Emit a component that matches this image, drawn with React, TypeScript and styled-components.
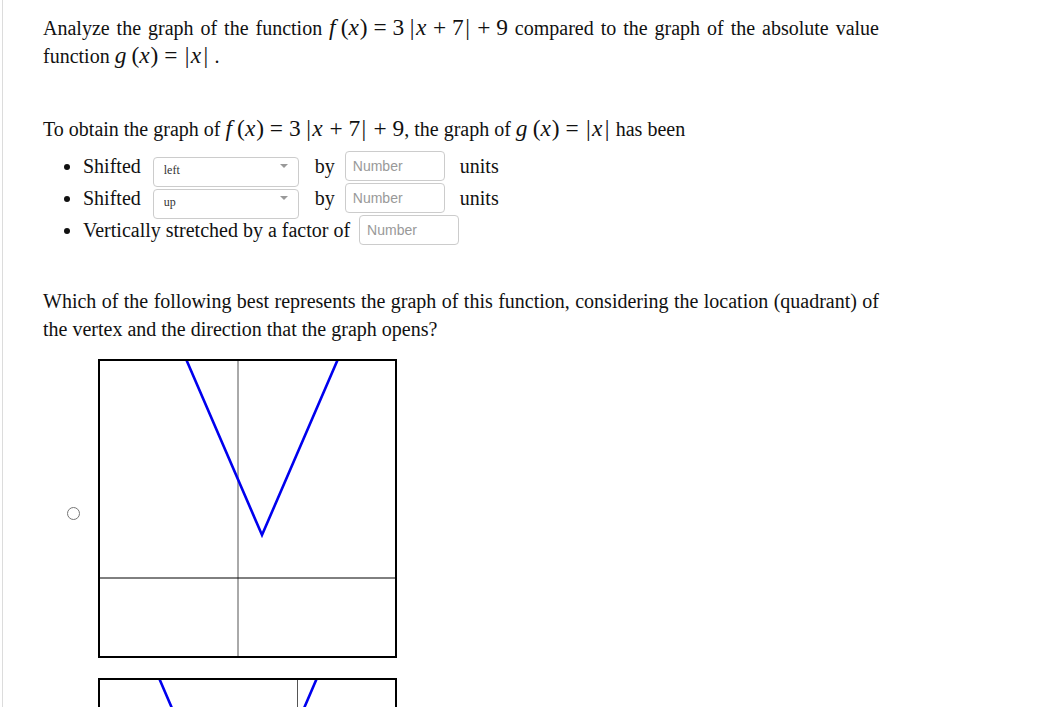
import styled, { createGlobalStyle } from "styled-components";

const GlobalStyle = createGlobalStyle`
  html, body {
    margin: 0;
    padding: 0;
    background: #fff;
  }
  body {
    font-family: "Liberation Serif", "Times New Roman", serif;
    font-size: 20px;
    color: #111;
  }
`;

const Page = styled.div`
  min-height: 707px;
  margin-left: 2px;
  border-left: 1px solid #dcdcdc;
  padding: 14px 0 0 40px;
  box-sizing: border-box;
`;

const Content = styled.div`
  width: 836px;
`;

const Para = styled.p<{ $gap?: number }>`
  margin: 0 0 ${({ $gap }) => $gap ?? 0}px;
  line-height: 28px;
  text-align: justify;
`;

const MathSpan = styled.span`
  font-size: 1.17em;
  line-height: 1;
  white-space: nowrap;
`;

const V = styled.i`
  font-style: italic;
  font-family: "Liberation Serif", serif;
  padding-right: 0.04em;
`;

const Op = styled.span`
  margin: 0 0.25em;
`;

const Sp = styled.span`
  margin-right: 0.18em;
`;

const Bar = styled.span`
  font-style: normal;
  margin: 0 0.06em;
`;

const List = styled.ul`
  margin: 7px 0 41px;
  padding-left: 40px;
`;

const Item = styled.li`
  height: 32px;
  line-height: 32px;
`;

const Row = styled.div`
  display: flex;
  align-items: center;
  height: 32px;
`;

const Word = styled.span``;

const SelectWrap = styled.div`
  position: relative;
  width: 146px;
  height: 30px;
  margin: 0 16px 0 12px;
`;

const Select = styled.select`
  appearance: none;
  width: 100%;
  height: 100%;
  box-sizing: border-box;
  border: 1px solid #ccc;
  border-radius: 4px;
  background: #fff;
  padding: 0 10px 3px;
  font-family: "Liberation Serif", serif;
  font-size: 12px;
  color: #333;
`;

const Caret = styled.span`
  position: absolute;
  right: 11px;
  top: 13px;
  width: 0;
  height: 0;
  border-left: 4px solid transparent;
  border-right: 4px solid transparent;
  border-top: 4px solid #999;
  pointer-events: none;
`;

const NumberInput = styled.input<{ $ml?: number }>`
  width: 100px;
  height: 30px;
  box-sizing: border-box;
  margin: 0 15px 0 ${({ $ml }) => $ml ?? 10}px;
  border: 1px solid #ccc;
  border-radius: 4px;
  padding: 0 7px;
  font-family: "Liberation Sans", Arial, sans-serif;
  font-size: 14px;
  &::placeholder {
    color: #999;
  }
`;

const Choice = styled.label`
  display: flex;
  align-items: center;
  margin-bottom: 20px;
`;

const Radio = styled.input`
  width: 13px;
  height: 13px;
  margin: 10px 18px 0 24px;
  accent-color: #888;
`;

const GraphBox = styled.svg`
  display: block;
  width: 299px;
  height: 299px;
`;

type GraphProps = { axisX: number; axisY: number; v: [number, number]; top: number[] };

const Graph = ({ axisX, axisY, v, top }: GraphProps) => (
  <GraphBox viewBox="0 0 299 299">
    <line x1={axisX} y1="0" x2={axisX} y2="299" stroke="#555" strokeWidth="1" />
    <line x1="0" y1={axisY} x2="299" y2={axisY} stroke="#000" strokeWidth="1" />
    <polyline
      points={`${top[0]},0 ${v[0]},${v[1]} ${top[1]},0`}
      fill="none"
      stroke="#0000ee"
      strokeWidth="2.6"
      strokeLinejoin="miter"
    />
    <rect x="1" y="1" width="297" height="297" fill="none" stroke="#000" strokeWidth="2" />
  </GraphBox>
);

const F = ({ name }: { name: string }) => (
  <>
    <V>{name}</V>
    <Sp />
    (<V>x</V>)
  </>
);

const FExpr = () => (
  <MathSpan>
    <F name="f" />
    <Op>=</Op>3<Sp />
    <Bar>|</Bar>
    <V>x</V>
    <Op>+</Op>7<Bar>|</Bar>
    <Op>+</Op>9
  </MathSpan>
);

const GExpr = () => (
  <MathSpan>
    <F name="g" />
    <Op>=</Op>
    <Bar>|</Bar>
    <V>x</V>
    <Bar>|</Bar>
  </MathSpan>
);

export default function App() {
  return (
    <>
      <GlobalStyle />
      <Page>
        <Content>
          <Para $gap={45}>
            Analyze the graph of the function <FExpr /> compared to the graph of the absolute value
            function <GExpr /> .
          </Para>
          <Para>
            To obtain the graph of <FExpr />, the graph of <GExpr /> has been
          </Para>
          <List>
            <Item>
              <Row>
                <Word>Shifted</Word>
                <SelectWrap>
                  <Select defaultValue="left">
                    <option value="left">left</option>
                    <option value="right">right</option>
                  </Select>
                  <Caret />
                </SelectWrap>
                <Word>by</Word>
                <NumberInput placeholder="Number" />
                <Word>units</Word>
              </Row>
            </Item>
            <Item>
              <Row>
                <Word>Shifted</Word>
                <SelectWrap>
                  <Select defaultValue="up">
                    <option value="up">up</option>
                    <option value="down">down</option>
                  </Select>
                  <Caret />
                </SelectWrap>
                <Word>by</Word>
                <NumberInput placeholder="Number" />
                <Word>units</Word>
              </Row>
            </Item>
            <Item>
              <Row>
                <Word>Vertically stretched by a factor of</Word>
                <NumberInput placeholder="Number" $ml={9} />
              </Row>
            </Item>
          </List>
          <Para $gap={16}>
            Which of the following best represents the graph of this function, considering the location
            (quadrant) of the vertex and the direction that the graph opens?
          </Para>
          <Choice>
            <Radio type="radio" name="graph" />
            <Graph axisX={140} axisY={219} v={[164, 176]} top={[88, 240]} />
          </Choice>
          <Choice>
            <Radio type="radio" name="graph" />
            <Graph axisX={199.5} axisY={150} v={[140, 184]} top={[61, 219]} />
          </Choice>
        </Content>
      </Page>
    </>
  );
}
